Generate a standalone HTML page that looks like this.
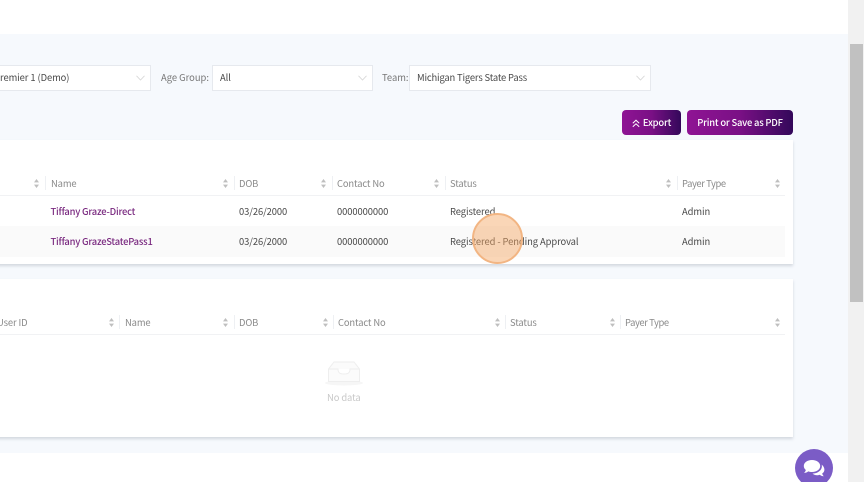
<!DOCTYPE html>
<html><head><meta charset="utf-8">
<style>
html,body{margin:0;padding:0;width:864px;height:482px;overflow:hidden;background:#fff}
#p{position:relative;width:864px;height:482px;overflow:hidden;font-family:"Noto Sans CJK SC","Liberation Sans",sans-serif;font-size:9.4px;letter-spacing:-.08px;color:#4a4a4a;filter:blur(.25px)}
#p div,#p span,#p svg{position:absolute}
.t{white-space:nowrap;line-height:14px;height:14px}
.h{color:#8a8a8a;letter-spacing:-.12px}
.l{color:#777;letter-spacing:0}
.n{color:#7a2a80;font-weight:500;letter-spacing:-.2px}
.sel{background:#fff;border:1px solid #e6e9ee;box-sizing:border-box;height:26px;top:65px}
.d{width:1px;height:14px;background:#eef0f3}
.btn{background:linear-gradient(90deg,#8f1494 0%,#7a1085 50%,#33085a 100%);border-radius:4px;height:25px;top:110px;color:#fff;font-weight:500;text-align:center;line-height:25px;white-space:nowrap;letter-spacing:-.2px}
.c{box-shadow:0 2px 3px rgba(70,80,100,.2);background:#fff}
</style></head><body>
<div id="p">
<div style="left:0;top:34px;width:848px;height:419px;background:#f6f9fd"></div>
<div style="left:848px;top:0;width:16px;height:482px;background:#f1f1f1"></div>
<div style="left:850px;top:44px;width:13px;height:258px;background:#c1c1c1"></div>

<div class="sel" style="left:-10px;width:161px"></div>
<span class="t" style="left:0;top:70px">remier 1 (Demo)</span>
<svg style="left:136px;top:75px" width="9" height="6" viewBox="0 0 9 6"><path d="M.5 .8L4.5 5L8.5 .8" fill="none" stroke="#d6d6d6" stroke-width=".8"/></svg>
<span class="t l" style="left:161px;top:70px">Age Group:</span>
<div class="sel" style="left:212px;width:161px"></div>
<span class="t" style="left:220px;top:70px">All</span>
<svg style="left:358px;top:75px" width="9" height="6" viewBox="0 0 9 6"><path d="M.5 .8L4.5 5L8.5 .8" fill="none" stroke="#d6d6d6" stroke-width=".8"/></svg>
<span class="t l" style="left:382px;top:70px">Team:</span>
<div class="sel" style="left:409px;width:242px"></div>
<span class="t" style="left:417px;top:70px;letter-spacing:-.16px">Michigan Tigers State Pass</span>
<svg style="left:636px;top:75px" width="9" height="6" viewBox="0 0 9 6"><path d="M.5 .8L4.5 5L8.5 .8" fill="none" stroke="#d6d6d6" stroke-width=".8"/></svg>

<div class="btn" style="left:622px;width:59px;padding-left:11px;box-sizing:border-box">Export</div>
<svg style="left:632px;top:119px" width="8" height="9" viewBox="0 0 8 9"><path d="M.8 4.2L4 1.2L7.2 4.2M.8 7.8L4 4.8L7.2 7.8" fill="none" stroke="#fff" stroke-width="1"/></svg>
<div class="btn" style="left:687px;width:106px">Print or Save as PDF</div>

<!-- card 1 -->
<div class="c" style="left:-10px;top:140px;width:803px;height:124px"></div>
<div style="left:0;top:195px;width:785px;height:1px;background:#f1f2f4"></div>
<div style="left:0;top:226px;width:785px;height:31px;background:#fafafa"></div>
<span class="d" style="left:45px;top:176px"></span>
<span class="d" style="left:234px;top:176px"></span>
<span class="d" style="left:332px;top:176px"></span>
<span class="d" style="left:445px;top:176px"></span>
<span class="d" style="left:677px;top:176px"></span>
<span class="t h" style="left:51px;top:176px">Name</span>
<span class="t h" style="left:239px;top:176px">DOB</span>
<span class="t h" style="left:337px;top:176px">Contact No</span>
<span class="t h" style="left:450px;top:176px">Status</span>
<span class="t h" style="left:682px;top:176px;letter-spacing:-.4px">Payer Type</span>
<svg style="left:33px;top:179px" width="7" height="9" viewBox="0 0 7 9"><path d="M3.5 0L6 3.4H1zM3.5 9L6 5.6H1z" fill="#bfbfbf"/></svg>
<svg style="left:222px;top:179px" width="7" height="9" viewBox="0 0 7 9"><path d="M3.5 0L6 3.4H1zM3.5 9L6 5.6H1z" fill="#bfbfbf"/></svg>
<svg style="left:320px;top:179px" width="7" height="9" viewBox="0 0 7 9"><path d="M3.5 0L6 3.4H1zM3.5 9L6 5.6H1z" fill="#bfbfbf"/></svg>
<svg style="left:433px;top:179px" width="7" height="9" viewBox="0 0 7 9"><path d="M3.5 0L6 3.4H1zM3.5 9L6 5.6H1z" fill="#bfbfbf"/></svg>
<svg style="left:665px;top:179px" width="7" height="9" viewBox="0 0 7 9"><path d="M3.5 0L6 3.4H1zM3.5 9L6 5.6H1z" fill="#bfbfbf"/></svg>
<svg style="left:774px;top:179px" width="7" height="9" viewBox="0 0 7 9"><path d="M3.5 0L6 3.4H1zM3.5 9L6 5.6H1z" fill="#bfbfbf"/></svg>

<span class="t n" style="left:50.5px;top:204px">Tiffany Graze-Direct</span>
<span class="t" style="left:239px;top:204px">03/26/2000</span>
<span class="t" style="left:337px;top:204px">0000000000</span>
<span class="t" style="left:450px;top:204px">Registered</span>
<span class="t" style="left:682px;top:204px">Admin</span>
<span class="t n" style="left:50.5px;top:234px">Tiffany GrazeStatePass1</span>
<span class="t" style="left:239px;top:234px">03/26/2000</span>
<span class="t" style="left:337px;top:234px">0000000000</span>
<span class="t" style="left:450px;top:234px">Registered - Pending Approval</span>
<span class="t" style="left:682px;top:234px">Admin</span>

<!-- card 2 -->
<div class="c" style="left:-10px;top:279px;width:803px;height:158px"></div>
<div style="left:0;top:334px;width:785px;height:1px;background:#f1f2f4"></div>
<span class="d" style="left:119px;top:315px"></span>
<span class="d" style="left:234px;top:315px"></span>
<span class="d" style="left:333px;top:315px"></span>
<span class="d" style="left:505px;top:315px"></span>
<span class="d" style="left:620px;top:315px"></span>
<span class="t h" style="left:-3px;top:315px">User ID</span>
<span class="t h" style="left:125px;top:315px">Name</span>
<span class="t h" style="left:239px;top:315px">DOB</span>
<span class="t h" style="left:338px;top:315px">Contact No</span>
<span class="t h" style="left:510px;top:315px">Status</span>
<span class="t h" style="left:625px;top:315px;letter-spacing:-.4px">Payer Type</span>
<svg style="left:108px;top:318px" width="7" height="9" viewBox="0 0 7 9"><path d="M3.5 0L6 3.4H1zM3.5 9L6 5.6H1z" fill="#bfbfbf"/></svg>
<svg style="left:222px;top:318px" width="7" height="9" viewBox="0 0 7 9"><path d="M3.5 0L6 3.4H1zM3.5 9L6 5.6H1z" fill="#bfbfbf"/></svg>
<svg style="left:322px;top:318px" width="7" height="9" viewBox="0 0 7 9"><path d="M3.5 0L6 3.4H1zM3.5 9L6 5.6H1z" fill="#bfbfbf"/></svg>
<svg style="left:494px;top:318px" width="7" height="9" viewBox="0 0 7 9"><path d="M3.5 0L6 3.4H1zM3.5 9L6 5.6H1z" fill="#bfbfbf"/></svg>
<svg style="left:609px;top:318px" width="7" height="9" viewBox="0 0 7 9"><path d="M3.5 0L6 3.4H1zM3.5 9L6 5.6H1z" fill="#bfbfbf"/></svg>
<svg style="left:774px;top:318px" width="7" height="9" viewBox="0 0 7 9"><path d="M3.5 0L6 3.4H1zM3.5 9L6 5.6H1z" fill="#bfbfbf"/></svg>

<svg style="left:324px;top:358px" width="40" height="30" viewBox="0 0 40 30">
<ellipse cx="20" cy="25" rx="19" ry="2.5" fill="#f6f6f6"/>
<path d="M10 4H30L35.5 11V23.5H4.5V11Z" fill="#fbfbfb" stroke="#eeeeee" stroke-width="1"/>
<path d="M4.5 11H14C14 15 16 16 20 16C24 16 26 15 26 11H35.5" fill="#fff" stroke="#eeeeee" stroke-width="1"/>
</svg>
<span class="t" style="left:327px;top:390px;color:#c8c8c8">No data</span>

<!-- highlight -->
<div style="left:472px;top:213px;width:51px;height:51px;box-sizing:border-box;border-radius:50%;background:rgba(244,164,96,.45);border:2px solid #f2b583"></div>

<!-- chat -->
<div style="left:795px;top:449px;width:38px;height:38px;border-radius:50%;background:#7b5cc6"></div>
<svg style="left:803px;top:459px" width="23" height="19" viewBox="0 0 23 19">
<path d="M9 1C4.2 1 .8 3.6 .8 7C.8 8.6 1.6 10 2.8 11C2.6 12.2 1.8 13.2 1 14C2.8 13.9 4.2 13.2 5.2 12.4C6.4 12.8 7.6 13 9 13C13.8 13 17.2 10.4 17.2 7C17.2 3.6 13.8 1 9 1Z" fill="#fff"/>
<path d="M18.6 5.6C18.8 6.2 18.9 6.6 18.9 7.2C18.9 11 15 14.4 9.5 14.6C10.6 15.6 12.2 16.2 14 16.2C15 16.2 16 16 16.8 15.7C17.8 16.5 19.2 17.2 20.8 17.3C20 16.5 19.4 15.6 19.2 14.5C20.6 13.5 21.4 12.2 21.4 10.7C21.4 8.6 20.3 6.8 18.6 5.6Z" fill="#fff"/>
</svg>
</div>
</body></html>
